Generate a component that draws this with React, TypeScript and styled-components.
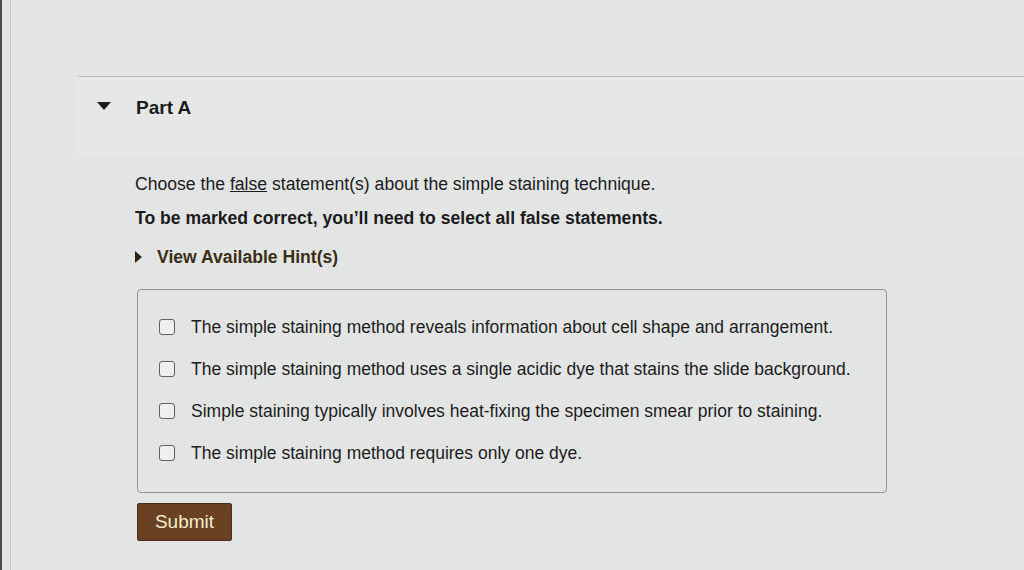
import styled, { createGlobalStyle } from 'styled-components';

const Global = createGlobalStyle`
  html, body {
    margin: 0;
    padding: 0;
    background: #e3e5e5;
    font-family: "Liberation Sans", Arial, Helvetica, sans-serif;
    color: #1c1c1c;
  }
`;

const Page = styled.div`
  display: flex;
  width: 1024px;
  height: 570px;
  overflow: hidden;
  border-left: 2px solid #4a4a4a;
  box-sizing: border-box;
  background: #e3e5e5;
`;

const Rail = styled.div`
  width: 8px;
  flex-shrink: 0;
  border-right: 1px solid #c3c5c6;
`;

const Main = styled.div`
  flex: 1;
  display: flex;
  flex-direction: column;
  padding-top: 76px;
  padding-left: 67px;
`;

const Header = styled.div`
  display: flex;
  align-items: flex-start;
  gap: 25px;
  height: 80px;
  padding: 20px 0 0 19px;
  box-sizing: border-box;
  border-top: 1px solid #b7babb;
  background: #e6e8e8;
`;

const Caret = styled.svg`
  margin-top: 5px;
  flex-shrink: 0;
`;

const Title = styled.div`
  font-size: 19px;
  font-weight: 700;
  line-height: 22px;
`;

const Body = styled.div`
  display: flex;
  flex-direction: column;
  align-items: flex-start;
  padding: 17px 0 0 57px;
`;

const Prompt = styled.div`
  font-size: 17.6px;
  line-height: 22px;
`;

const Instruction = styled.div`
  margin-top: 12px;
  font-size: 17.6px;
  font-weight: 700;
  line-height: 22px;
`;

const Hint = styled.div`
  margin-top: 17px;
  display: flex;
  align-items: center;
  gap: 15px;
  font-size: 17.6px;
  font-weight: 700;
  line-height: 22px;
  color: #3a2e14;
`;

const Options = styled.div`
  margin: 21px 0 0 2px;
  width: 750px;
  box-sizing: border-box;
  padding: 16px 0 18px 21px;
  border: 1px solid #8f9293;
  border-radius: 4px;
  display: flex;
  flex-direction: column;
`;

const Option = styled.label`
  display: flex;
  align-items: center;
  gap: 16px;
  height: 42px;
  font-size: 17.5px;
`;

const Box = styled.span`
  width: 14px;
  height: 14px;
  border: 1.5px solid #5e6061;
  border-radius: 3px;
  background: #eef0f0;
  flex-shrink: 0;
`;

const Submit = styled.button`
  margin: 10px 0 0 2px;
  width: 95px;
  height: 38px;
  background: #6b4124;
  border: 1px solid #4b2d18;
  border-radius: 2px;
  color: #f6eecf;
  font-family: "Liberation Sans", Arial, sans-serif;
  font-size: 19px;
  font-weight: 500;
  padding: 0;
`;

const options = [
  'The simple staining method reveals information about cell shape and arrangement.',
  'The simple staining method uses a single acidic dye that stains the slide background.',
  'Simple staining typically involves heat-fixing the specimen smear prior to staining.',
  'The simple staining method requires only one dye.',
];

export default function App() {
  return (
    <>
      <Global />
      <Page>
        <Rail />
        <Main>
          <Header>
            <Caret width="14" height="8" viewBox="0 0 14 8">
              <path d="M0 0 L14 0 L7 8 Z" fill="#1c1c1c" />
            </Caret>
            <Title>Part A</Title>
          </Header>
          <Body>
            <Prompt>
              Choose the <u>false</u> statement(s) about the simple staining technique.
            </Prompt>
            <Instruction>To be marked correct, you’ll need to select all false statements.</Instruction>
            <Hint>
              <svg width="7" height="12" viewBox="0 0 7 12">
                <path d="M0 0 L7 6 L0 12 Z" fill="#2a2210" />
              </svg>
              View Available Hint(s)
            </Hint>
            <Options>
              {options.map((text) => (
                <Option key={text}>
                  <Box />
                  {text}
                </Option>
              ))}
            </Options>
            <Submit>Submit</Submit>
          </Body>
        </Main>
      </Page>
    </>
  );
}
